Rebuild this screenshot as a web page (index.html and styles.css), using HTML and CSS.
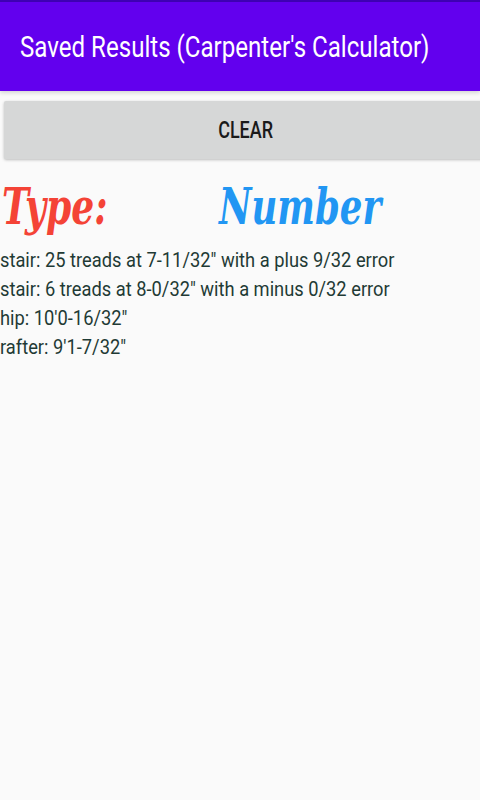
FILE: index.html
```html
<!DOCTYPE html>
<html>
<head>
<meta charset="utf-8">
<link rel="stylesheet" href="styles.css">
</head>
<body>
<div class="status"></div>
<header class="appbar"><span class="title sx">Saved Results (Carpenter's Calculator)</span></header>
<main class="content">
  <button class="clear"><span class="sxc">CLEAR</span></button>
  <div class="heads">
    <span class="type sx">Type:</span>
    <span class="number sx">Number</span>
  </div>
  <div class="list">
    <div class="row"><span class="sx">stair: 25 treads at 7-11/32" with a plus 9/32 error</span></div>
    <div class="row"><span class="sx">stair: 6 treads at 8-0/32" with a minus 0/32 error</span></div>
    <div class="row"><span class="sx">hip: 10'0-16/32"</span></div>
    <div class="row"><span class="sx">rafter: 9'1-7/32"</span></div>
  </div>
</main>
</body>
</html>
```
FILE: styles.css
```css
html, body {
  margin: 0;
  padding: 0;
  background: #fafafa;
  font-family: Roboto, "Liberation Sans", sans-serif;
  width: 480px;
  height: 800px;
  overflow: hidden;
}
.sx {
  display: inline-block;
  white-space: nowrap;
  transform: scaleX(0.75);
  transform-origin: left center;
}
.sxc {
  display: inline-block;
  white-space: nowrap;
  transform: scaleX(0.75);
  transform-origin: center center;
}
.status {
  height: 2px;
  background: #3f00b5;
}
.appbar {
  height: 89px;
  background: #6200ee;
  color: #fff;
  display: flex;
  align-items: center;
  padding-left: 20px;
  box-shadow: 0 2px 4px rgba(0,0,0,0.15);
}
.title {
  font-size: 30px;
  font-weight: 400;
  transform: scaleX(0.803);
}
.content {
  padding-top: 10px;
}
.clear {
  display: flex;
  align-items: center;
  justify-content: center;
  margin-left: 4px;
  width: 484px;
  height: 58px;
  border: none;
  border-radius: 2px;
  background: #d6d7d7;
  box-shadow: 0 1px 3px rgba(0,0,0,0.25);
  color: #1a1a1a;
  font-family: Roboto, sans-serif;
  font-weight: 500;
  font-size: 24px;
  padding: 0;
}
.heads {
  display: flex;
  height: 80px;
  margin-top: 7px;
  align-items: center;
}
.type, .number {
  font-family: "DejaVu Serif", serif;
  font-style: italic;
  font-weight: 700;
  font-size: 50px;
}
.type { color: #f44336; margin-left: 2px; width: 217px; transform: scaleX(0.723); }
.number { color: #2196f3; transform: scaleX(0.711); }
.list {
  color: #1f3a35;
  font-size: 21px;
}
.row {
  height: 29px;
  line-height: 29px;
}
.row .sx {
  transform: scaleX(0.871);
}
```
